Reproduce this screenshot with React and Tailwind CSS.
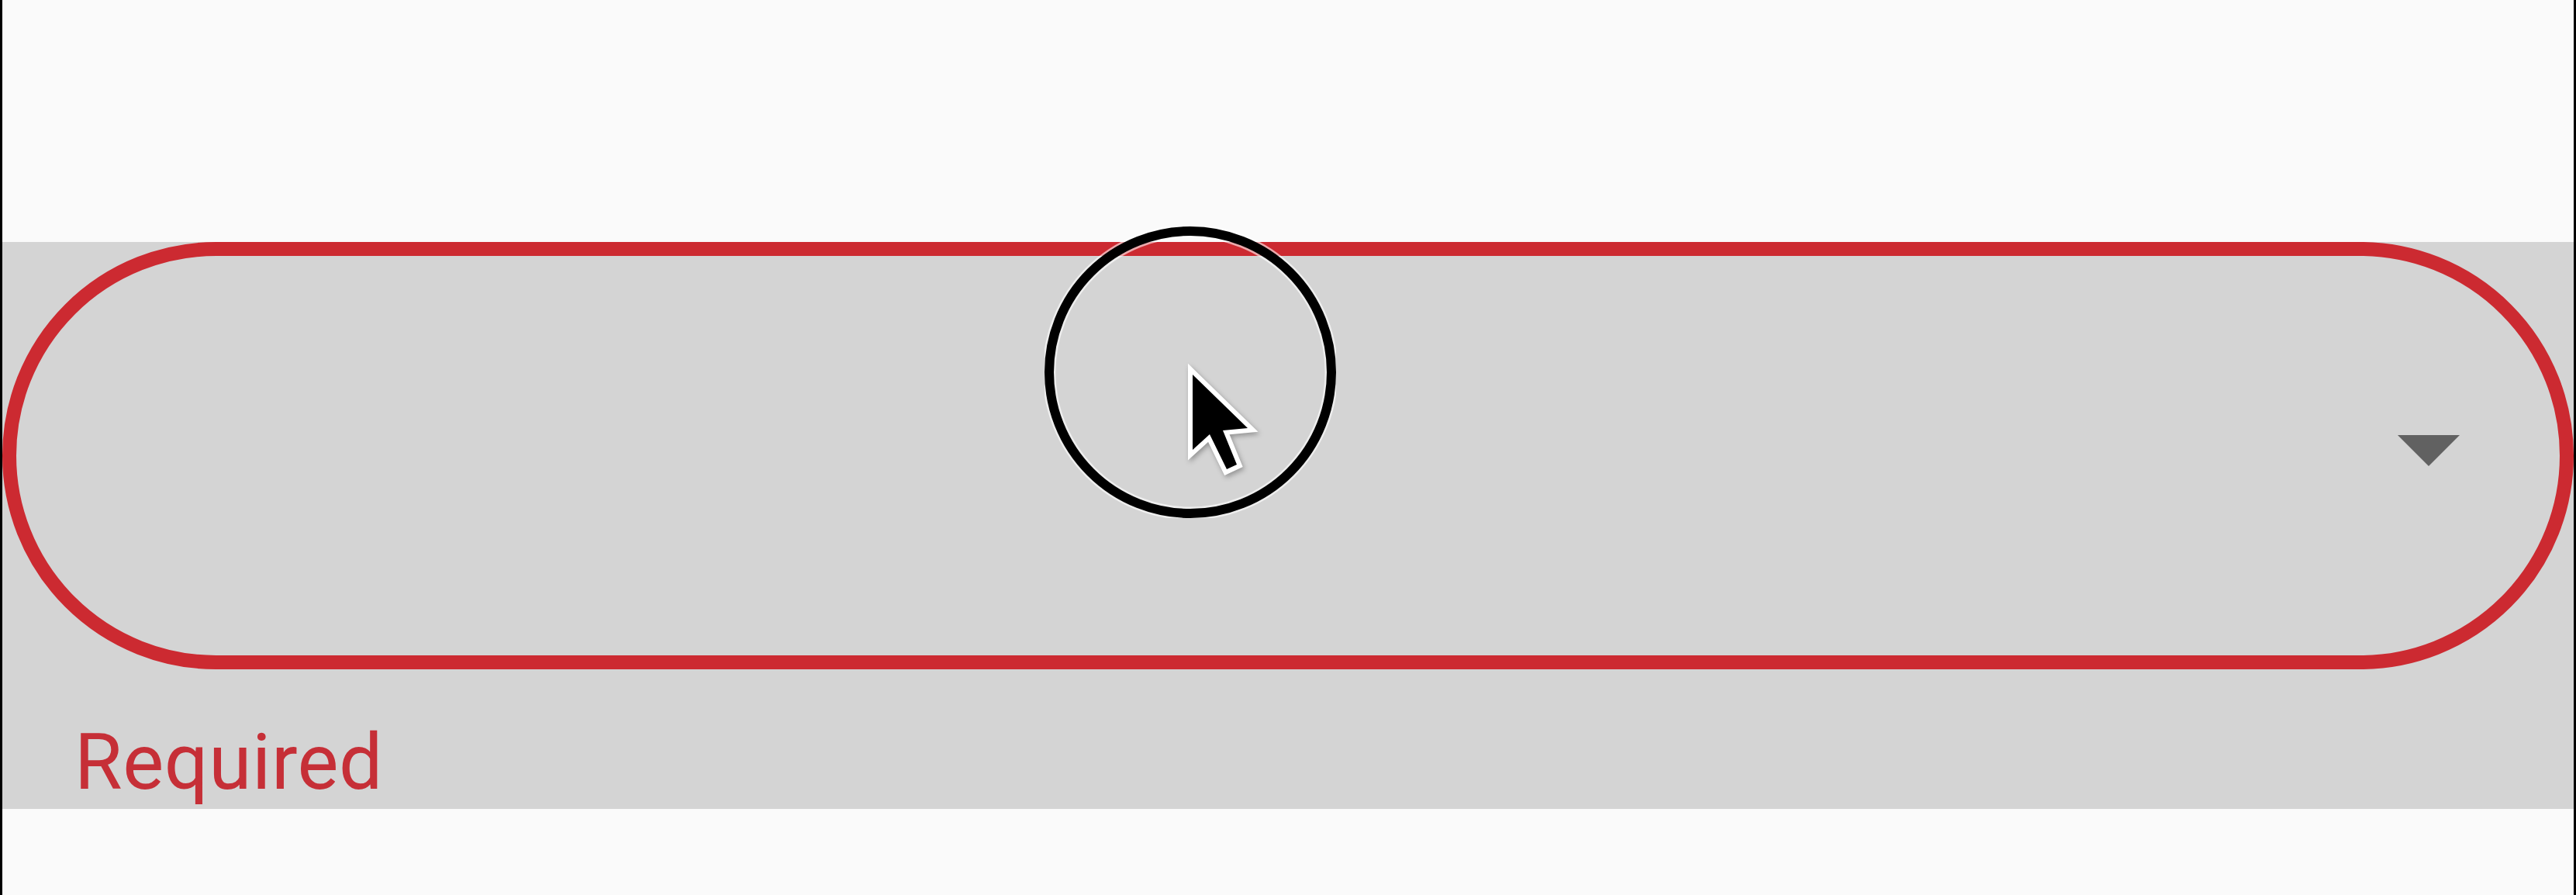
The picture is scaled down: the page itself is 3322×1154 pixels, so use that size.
import React from "react";

const Cursor = () => {
  return (
    <div className="absolute left-[1344px] top-[292px] w-[376px] h-[376px] pointer-events-none">
      {/* touch ring */}
      <svg width="376" height="376" viewBox="0 0 376 376" className="absolute inset-0">
        <circle cx="188" cy="188" r="182" fill="none" stroke="#ffffff" strokeOpacity="0.6" strokeWidth="17" />
        <circle cx="188" cy="188" r="182" fill="none" stroke="#000000" strokeWidth="12" />
      </svg>

      {/* arrow pointer */}
      <svg
        width="376"
        height="376"
        viewBox="0 0 376 376"
        className="absolute inset-0 drop-shadow-[2px_3px_3px_rgba(0,0,0,0.3)]"
      >
        <polygon
          points="191,191 191,288 213,268 235,313 248,307 230,263 262,260"
          fill="#000000"
          stroke="#ffffff"
          strokeWidth="12"
          strokeLinejoin="miter"
          paintOrder="stroke"
        />
      </svg>
    </div>
  );
};

const App = () => {
  return (
    <div className="relative w-full h-[1154px] bg-[#fafafa] border-x-[3px] border-black flex flex-col font-['Roboto',sans-serif]">
      {/* empty space above the field */}
      <div className="h-[312px] shrink-0" />

      {/* select field with error */}
      <div className="h-[731px] shrink-0 bg-[#d4d4d4] flex flex-col">
        <div className="h-[551px] shrink-0 rounded-full border-[18px] border-[#cc2a31] flex items-center justify-end pr-[129px]">
          <svg width="80" height="40" viewBox="0 0 80 40" className="-mt-[14px]">
            <polygon points="0,0 80,0 40,40" fill="#616161" />
          </svg>
        </div>

        <p className="mt-[70px] pl-[93px] text-[100px] leading-[100px] tracking-[0.6px] text-[#c62f37]">
          Required
        </p>
      </div>

      <Cursor />
    </div>
  );
};

export default App;
